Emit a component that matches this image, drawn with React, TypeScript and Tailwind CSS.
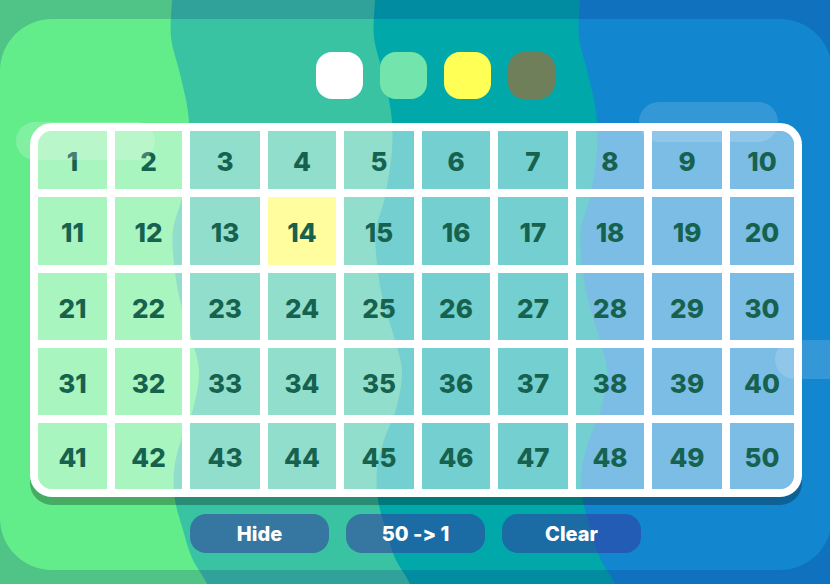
import React from 'react';

// wave boundary between green and teal; the other two are the same curve shifted right
const basePts: [number, number][] = [
  [173, -30], [172, 0], [171, 37], [180, 74], [188, 112], [189, 150], [182, 197], [173, 230],
  [174, 264], [180, 300], [192, 340], [199, 372], [193, 409], [181, 440], [174, 470],
  [175, 500], [183, 530], [192, 558], [207, 584], [222, 620],
];

function wavePath(shift: number) {
  const pts = basePts.map(([x, y]) => [x + shift, y] as [number, number]);
  let d = `M-20,-30 L${pts[0][0]},${pts[0][1]}`;
  for (let i = 0; i < pts.length - 1; i++) {
    const p0 = pts[i - 1] || pts[i];
    const p1 = pts[i];
    const p2 = pts[i + 1];
    const p3 = pts[i + 2] || p2;
    const c1x = p1[0] + (p2[0] - p0[0]) / 6;
    const c1y = p1[1] + (p2[1] - p0[1]) / 6;
    const c2x = p2[0] - (p3[0] - p1[0]) / 6;
    const c2y = p2[1] - (p3[1] - p1[1]) / 6;
    d += ` C${c1x},${c1y} ${c2x},${c2y} ${p2[0]},${p2[1]}`;
  }
  return d + ' L-20,620 Z';
}

function Backdrop() {
  return (
    <svg className="absolute inset-0" width="830" height="584" viewBox="0 0 830 584">
      <rect x="0" y="0" width="830" height="584" fill="#1287cf" />
      <path d={wavePath(408)} fill="#01a8aa" />
      <path d={wavePath(203)} fill="#3ac3a2" />
      <path d={wavePath(0)} fill="#62ed8a" />
      {/* darker outer band round the big rounded panel */}
      <path
        fillRule="evenodd"
        fill="rgba(10,30,125,0.2)"
        d="M-10,-10 H840 V594 H-10 Z M52,19 H780 A52,52 0 0 1 832,71 V518 A52,52 0 0 1 780,570 H52 A52,52 0 0 1 0,518 V71 A52,52 0 0 1 52,19 Z"
      />
    </svg>
  );
}

const swatches = ['bg-white', 'bg-[#73e4ac]', 'bg-[#ffff55]', 'bg-[#6e7f5a]'];

export default function App() {
  const nums = Array.from({ length: 50 }, (_, i) => i + 1);

  return (
    <div className="relative h-[584px] w-[830px] overflow-hidden font-['Inter','Liberation_Sans',sans-serif] [font-feature-settings:'calt'_0,'liga'_0]">
      <Backdrop />

      <div className="relative flex flex-col pt-[52px]">
        <div className="flex gap-[17px] pl-[316px]">
          {swatches.map((c) => (
            <div key={c} className={`h-[47px] w-[47px] rounded-2xl ${c}`} />
          ))}
        </div>

        <div className="ml-[30px] mt-[24px] w-[772px] overflow-hidden rounded-[22px] border-[8px] border-white shadow-[0_8px_0_rgba(0,0,0,0.28)]">
          <div className="grid grid-cols-[69px_67px_70px_68px_70px_68px_70px_68px_70px_64px] grid-rows-[58px_68px_67px_67px_66px] gap-[8px]">
            {nums.map((n) => (
              <div
                key={n}
                className={`flex items-center justify-center pt-[3px] text-[26px] font-extrabold text-[#17624f] shadow-[0_0_0_4px_#fff] ${
                  n === 14 ? 'bg-[#fffd9e]' : 'bg-white/45'
                }`}
              >
                {n}
              </div>
            ))}
          </div>
        </div>

        <div className="mt-[17px] flex justify-center gap-[17px] pl-px">
          {['Hide', '50 -> 1', 'Clear'].map((label) => (
            <button
              key={label}
              className="flex h-[39px] w-[139px] items-center justify-center rounded-2xl bg-[rgba(50,57,158,0.55)] pt-px text-[20px] font-extrabold text-white"
            >
              {label}
            </button>
          ))}
        </div>
      </div>

      {/* soft light pills lying over everything */}
      <div className="absolute left-[16px] top-[122px] h-[38px] w-[139px] rounded-full bg-white/20" />
      <div className="absolute left-[639px] top-[102px] h-[40px] w-[139px] rounded-full bg-white/15" />
      <div className="absolute left-[775px] top-[340px] h-[39px] w-[139px] rounded-full bg-white/15" />
    </div>
  );
}
